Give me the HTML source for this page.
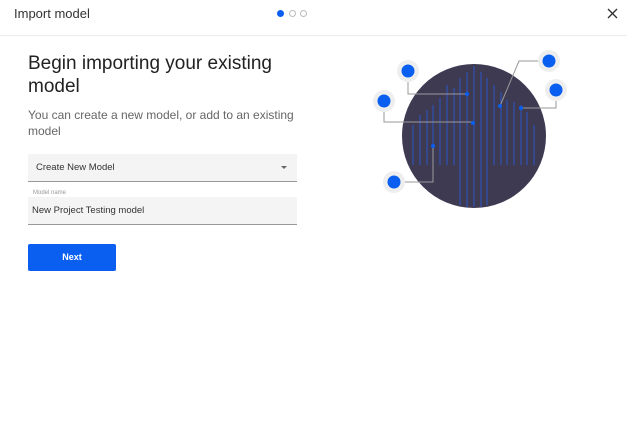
<!DOCTYPE html>
<html><head><style>
body{margin:0;width:627px;height:441px;background:#fff;font-family:"Liberation Sans",sans-serif;position:relative;overflow:hidden}
.hdr{position:absolute;left:0;top:0;width:627px;height:35px;border-bottom:1px solid #ececec}
.t{position:absolute;left:14px;top:6px;font-size:13px;color:#333}
.d{position:absolute;top:10px;width:5px;height:5px;border-radius:50%;border:1px solid #bbb}
h1{position:absolute;left:28px;top:52px;margin:0;font-weight:normal;font-size:19px;line-height:23px;color:#222;width:270px}
p{position:absolute;left:28px;top:107px;margin:0;font-size:12px;line-height:16px;color:#666;width:275px}
.f{position:absolute;left:28px;width:269px;background:#f4f4f4;border-bottom:1px solid #999;font-size:9.5px;color:#333}
.btn{position:absolute;left:28px;top:244px;width:88px;height:27px;background:#0a5ff0;border-radius:2px;color:#fff;font-size:9px;font-weight:bold;text-align:center;line-height:27px}
</style></head><body>
<div class="hdr"><div class="t">Import model</div>
<div class="d" style="left:277px;background:#0a5ff0;border-color:#0a5ff0"></div>
<div class="d" style="left:289px"></div><div class="d" style="left:300px"></div>
<svg style="position:absolute;left:607px;top:8px" width="11" height="11"><path d="M1 1L10 10M10 1L1 10" stroke="#333" stroke-width="1.4"/></svg>
</div>
<h1>Begin importing your existing model</h1>
<p>You can create a new model, or add to an existing model</p>
<div class="f" style="top:154px;height:27px"><span style="position:absolute;left:8px;top:8px">Create New Model</span><span style="position:absolute;right:10px;top:12px;width:0;height:0;border-left:3px solid transparent;border-right:3px solid transparent;border-top:3px solid #666"></span></div>
<div style="position:absolute;left:33px;top:190px;font-size:6px;color:#999">Model name</div>
<div class="f" style="top:197px;height:27px"><span style="position:absolute;left:4px;top:8px">New Project Testing model</span></div>
<div class="btn">Next</div>
<svg style="position:absolute;left:0;top:0" width="627" height="441">
<circle cx="474" cy="136" r="72" fill="#3e3a52"/>
<g stroke="#2a5bd8" stroke-width="1" opacity="0.85">
<line x1="413" y1="125" x2="413" y2="165"/><line x1="420" y1="115" x2="420" y2="165"/><line x1="427" y1="110" x2="427" y2="165"/><line x1="433" y1="105" x2="433" y2="165"/><line x1="440" y1="98" x2="440" y2="165"/><line x1="447" y1="85" x2="447" y2="165"/><line x1="454" y1="88" x2="454" y2="165"/><line x1="460" y1="78" x2="460" y2="205"/><line x1="467" y1="72" x2="467" y2="207"/><line x1="474" y1="66" x2="474" y2="207"/><line x1="481" y1="72" x2="481" y2="207"/><line x1="487" y1="78" x2="487" y2="205"/><line x1="494" y1="85" x2="494" y2="165"/><line x1="501" y1="92" x2="501" y2="165"/><line x1="507" y1="100" x2="507" y2="165"/><line x1="514" y1="102" x2="514" y2="165"/><line x1="521" y1="105" x2="521" y2="165"/><line x1="527" y1="112" x2="527" y2="165"/><line x1="534" y1="125" x2="534" y2="165"/>
</g>
<g fill="none" stroke="#999" stroke-width="1"><path d="M408 71V94H467"/><path d="M384 101V122H473"/><path d="M549 61H519L500 106"/><path d="M556 90V108H521"/><path d="M394 182H433V146"/></g>
<g fill="#0a5ff0"><circle cx="467" cy="94" r="2"/><circle cx="473" cy="123" r="2"/><circle cx="500" cy="106" r="2"/><circle cx="521" cy="108" r="2"/><circle cx="433" cy="146" r="2"/></g>
<g><circle cx="408" cy="71" r="11" fill="#eee"/><circle cx="384" cy="101" r="11" fill="#eee"/><circle cx="549" cy="61" r="11" fill="#eee"/><circle cx="556" cy="90" r="11" fill="#eee"/><circle cx="394" cy="182" r="11" fill="#eee"/></g>
<g fill="#0a5ff0"><circle cx="408" cy="71" r="6.5"/><circle cx="384" cy="101" r="6.5"/><circle cx="549" cy="61" r="6.5"/><circle cx="556" cy="90" r="6.5"/><circle cx="394" cy="182" r="6.5"/></g>
</svg>
</body></html>
